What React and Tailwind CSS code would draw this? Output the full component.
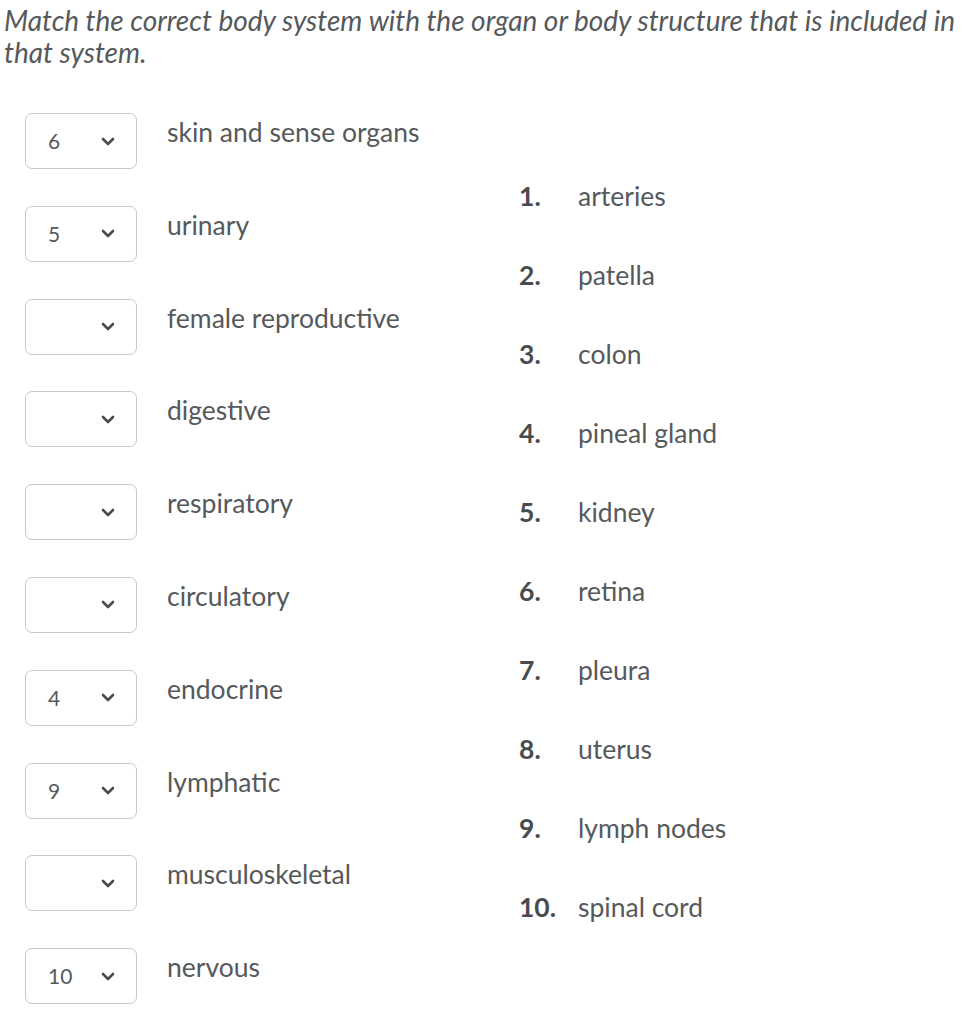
import React from "react";

const left = [
  ["6", "skin and sense organs"],
  ["5", "urinary"],
  ["", "female reproductive"],
  ["", "digestive"],
  ["", "respiratory"],
  ["", "circulatory"],
  ["4", "endocrine"],
  ["9", "lymphatic"],
  ["", "musculoskeletal"],
  ["10", "nervous"],
];

const right = [
  "arteries",
  "patella",
  "colon",
  "pineal gland",
  "kidney",
  "retina",
  "pleura",
  "uterus",
  "lymph nodes",
  "spinal cord",
];

function Chevron() {
  return (
    <svg width="14" height="9" viewBox="0 0 14 9" fill="none">
      <path d="M2 2 L7 7 L12 2" stroke="#494c4e" strokeWidth="2.6" strokeLinecap="round" strokeLinejoin="round" />
    </svg>
  );
}

export default function App() {
  return (
    <div className="bg-white text-[#56595c] min-h-[1024px]" style={{ fontFamily: "Lato, 'Open Sans', sans-serif" }}>
      <p className="italic text-[28px] leading-[32px] pl-[4px] pt-[4px]">
        Match the correct body system with the organ or body structure that is included in that system.
      </p>
      <div className="flex mt-[45px]">
        <div className="flex flex-col gap-[36.8px] pl-[25px] w-[519px]">
          {left.map(([v, label], i) => (
            <div key={i} className="flex items-start">
              <div className="w-[112px] h-[56px] shrink-0 border border-[#c8c9cb] rounded-[7px] flex items-center justify-between pl-[22px] pr-[21px] text-[21px]">
                <span>{v}</span>
                <Chevron />
              </div>
              <span className="ml-[30px] text-[26.5px] leading-[32px] mt-[3px]">{label}</span>
            </div>
          ))}
        </div>
        <div className="flex flex-col gap-[47px] pt-[68px]">
          {right.map((t, i) => (
            <div key={i} className="flex items-center h-[32px] text-[26.5px]">
              <span className="font-bold text-[#494c4e] w-[59px]">{i + 1}.</span>
              <span>{t}</span>
            </div>
          ))}
        </div>
      </div>
    </div>
  );
}
